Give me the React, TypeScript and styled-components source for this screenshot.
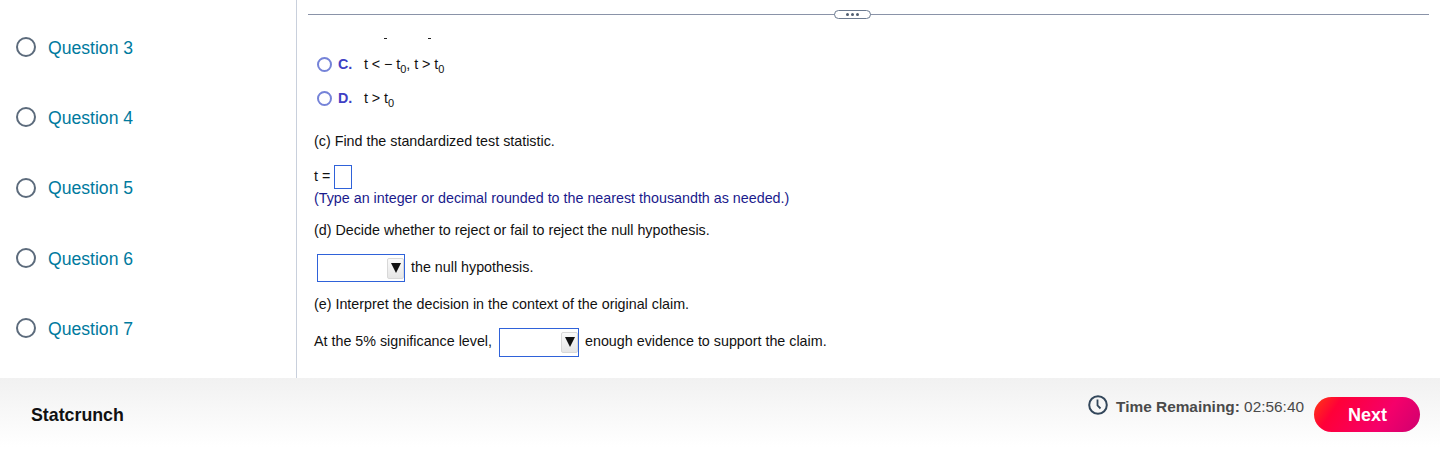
import styled, { createGlobalStyle } from 'styled-components';

const questions = [3, 4, 5, 6, 7];

const GlobalStyle = createGlobalStyle`
  html, body {
    margin: 0;
    padding: 0;
    background: #fff;
    font-family: "Liberation Sans", Arial, sans-serif;
    color: #111;
  }
`;

const App = () => {
  return (
    <Page>
      <GlobalStyle />
      <Content>
        <Sidebar>
          {questions.map((n) => (
            <QuestionRow key={n}>
              <QuestionRadio />
              <QuestionLink>Question {n}</QuestionLink>
            </QuestionRow>
          ))}
        </Sidebar>
        <Main>
          <Divider>
            <MorePill>
              <i />
              <i />
              <i />
            </MorePill>
          </Divider>
          <ClippedRow>
            <ClippedMark />
            <ClippedMark />
          </ClippedRow>
          <Row $height={26}>
            <OptionRadio />
            <OptionLetter>C.</OptionLetter>
            <MathText>
              t &lt; − t<sub>0</sub>, t &gt; t<sub>0</sub>
            </MathText>
          </Row>
          <Row $height={26} $gap={8}>
            <OptionRadio />
            <OptionLetter>D.</OptionLetter>
            <MathText>
              t &gt; t<sub>0</sub>
            </MathText>
          </Row>
          <Row $height={20} $gap={20}>
            (c) Find the standardized test statistic.
          </Row>
          <Row $height={24} $gap={14} $lift={2}>
            <MathLabel>t =</MathLabel>
            <AnswerBox />
          </Row>
          <Row $height={18}>
            <Hint>(Type an integer or decimal rounded to the nearest thousandth as needed.)</Hint>
          </Row>
          <Row $height={20} $gap={13}>
            (d) Decide whether to reject or fail to reject the null hypothesis.
          </Row>
          <Row $height={28} $gap={14} $lift={2}>
            <SelectBox $width={88} $height={28} $left={3}>
              <SelectArrow />
            </SelectBox>
            <AfterSelect>the null hypothesis.</AfterSelect>
          </Row>
          <Row $height={20} $gap={12}>
            (e) Interpret the decision in the context of the original claim.
          </Row>
          <Row $height={29} $gap={14} $lift={3}>
            At the 5% significance level,
            <SelectBox $width={80} $height={29} $left={7}>
              <SelectArrow />
            </SelectBox>
            <AfterSelect>enough evidence to support the claim.</AfterSelect>
          </Row>
        </Main>
      </Content>
      <Footer>
        <ToolName>Statcrunch</ToolName>
        <FooterRight>
          <Timer>
            <svg width="20" height="20" viewBox="0 0 20 20" fill="none" stroke="#33475b">
              <circle cx="10" cy="10" r="8.8" strokeWidth="2" />
              <path d="M9.5 4.5v6l3 3" strokeWidth="1.8" />
            </svg>
            <TimerText>
              <b>Time Remaining:</b> 02:56:40
            </TimerText>
          </Timer>
          <NextButton type="button">Next</NextButton>
        </FooterRight>
      </Footer>
    </Page>
  );
};

export default App;

const Page = styled.div`
  width: 1440px;
  height: 457px;
  overflow: hidden;
`;

const Content = styled.div`
  display: flex;
  height: 378px;
`;

const Sidebar = styled.nav`
  width: 296px;
  box-sizing: content-box;
  border-right: 1px solid #c9d0dc;
  padding-top: 12px;
`;

const QuestionRow = styled.div`
  display: flex;
  align-items: center;
  height: 70.25px;
  padding-left: 16px;
`;

const QuestionRadio = styled.span`
  width: 20px;
  height: 20px;
  box-sizing: border-box;
  border: 2.5px solid #5c6b7c;
  border-radius: 50%;
  margin-right: 12px;
`;

const QuestionLink = styled.a`
  font-size: 17.6px;
  color: #007a9e;
  padding-top: 2.5px;
`;

const Main = styled.main`
  flex: 1;
  font-size: 14.3px;
  padding-left: 17px;
`;

const Divider = styled.div`
  position: relative;
  height: 1px;
  margin: 14px 11px 0 -6px;
  background: #8a93a8;
`;

const MorePill = styled.div`
  position: absolute;
  left: 526px;
  top: -4px;
  width: 37px;
  height: 9px;
  box-sizing: border-box;
  border: 1px solid #6b7a90;
  border-radius: 5px;
  background: #fff;
  display: flex;
  align-items: center;
  justify-content: center;
  gap: 2px;

  i {
    width: 3px;
    height: 3px;
    border-radius: 50%;
    background: #4f5d70;
  }
`;

const ClippedRow = styled.div`
  display: flex;
  height: 36px;
  padding: 23px 0 0 70px;
  box-sizing: border-box;
  gap: 41px;
`;

const ClippedMark = styled.span`
  width: 3px;
  height: 1px;
  background: #222;
`;

const Row = styled.div<{ $height: number; $gap?: number; $lift?: number }>`
  display: flex;
  align-items: center;
  white-space: pre;
  box-sizing: border-box;
  height: ${(p) => p.$height}px;
  margin-top: ${(p) => p.$gap ?? 0}px;
  padding-bottom: ${(p) => p.$lift ?? 0}px;
`;

const OptionRadio = styled.span`
  width: 15px;
  height: 15px;
  box-sizing: border-box;
  border: 2px solid #7583d8;
  border-radius: 50%;
  margin: 0 6px 0 3px;
`;

const OptionLetter = styled.b`
  width: 26px;
  font-size: 14.3px;
  color: #3f3fc4;
`;

const MathText = styled.span`
  letter-spacing: -0.05px;

  sub {
    font-size: 11px;
    line-height: 0;
    vertical-align: -4px;
  }
`;

const MathLabel = styled.span`
  margin-right: 4px;
`;

const AnswerBox = styled.span`
  align-self: flex-start;
  width: 18px;
  height: 24px;
  box-sizing: border-box;
  border: 1px solid #2f62d9;
`;

const Hint = styled.span`
  color: #1a1a8c;
`;

const SelectBox = styled.span<{ $width: number; $height: number; $left: number }>`
  align-self: flex-start;
  display: flex;
  align-items: center;
  justify-content: flex-end;
  width: ${(p) => p.$width}px;
  height: ${(p) => p.$height}px;
  box-sizing: border-box;
  border: 1px solid #2f62d9;
  margin-left: ${(p) => p.$left}px;
`;

const SelectArrow = styled.span`
  display: flex;
  align-items: flex-start;
  justify-content: center;
  width: 17px;
  height: 21px;
  box-sizing: border-box;
  border: 1px solid #d8d8d8;
  border-radius: 2px;
  background: linear-gradient(#fafafa, #e6e6e6);
  padding-top: 4px;

  &::before {
    content: '';
    border-left: 5px solid transparent;
    border-right: 5px solid transparent;
    border-top: 10px solid #111;
  }
`;

const AfterSelect = styled.span`
  margin-left: 6px;
`;

const Footer = styled.footer`
  display: flex;
  justify-content: space-between;
  height: 69px;
  padding: 0 20px 0 31px;
  background: linear-gradient(#f1f1f1, #fff);
`;

const ToolName = styled.div`
  font-size: 17.8px;
  font-weight: 700;
  color: #111;
  margin-top: 27px;
`;

const FooterRight = styled.div`
  display: flex;
  align-items: flex-start;
  gap: 10px;
  padding-top: 19px;
`;

const Timer = styled.div`
  display: flex;
  align-items: flex-start;
  gap: 8px;
  color: #4a4a4a;
  font-size: 15.4px;
  margin-top: -2px;
`;

const TimerText = styled.span`
  margin-top: 3px;

  b {
    font-weight: 700;
  }
`;

const NextButton = styled.button`
  width: 106px;
  height: 35px;
  border: 0;
  border-radius: 18px;
  color: #fff;
  font-family: inherit;
  font-size: 18px;
  font-weight: 700;
  padding: 2px 0 0 1px;
  background: linear-gradient(125deg, #ff3a12 0%, #ff0038 22%, #f5006a 65%, #cf0070 100%);
`;
